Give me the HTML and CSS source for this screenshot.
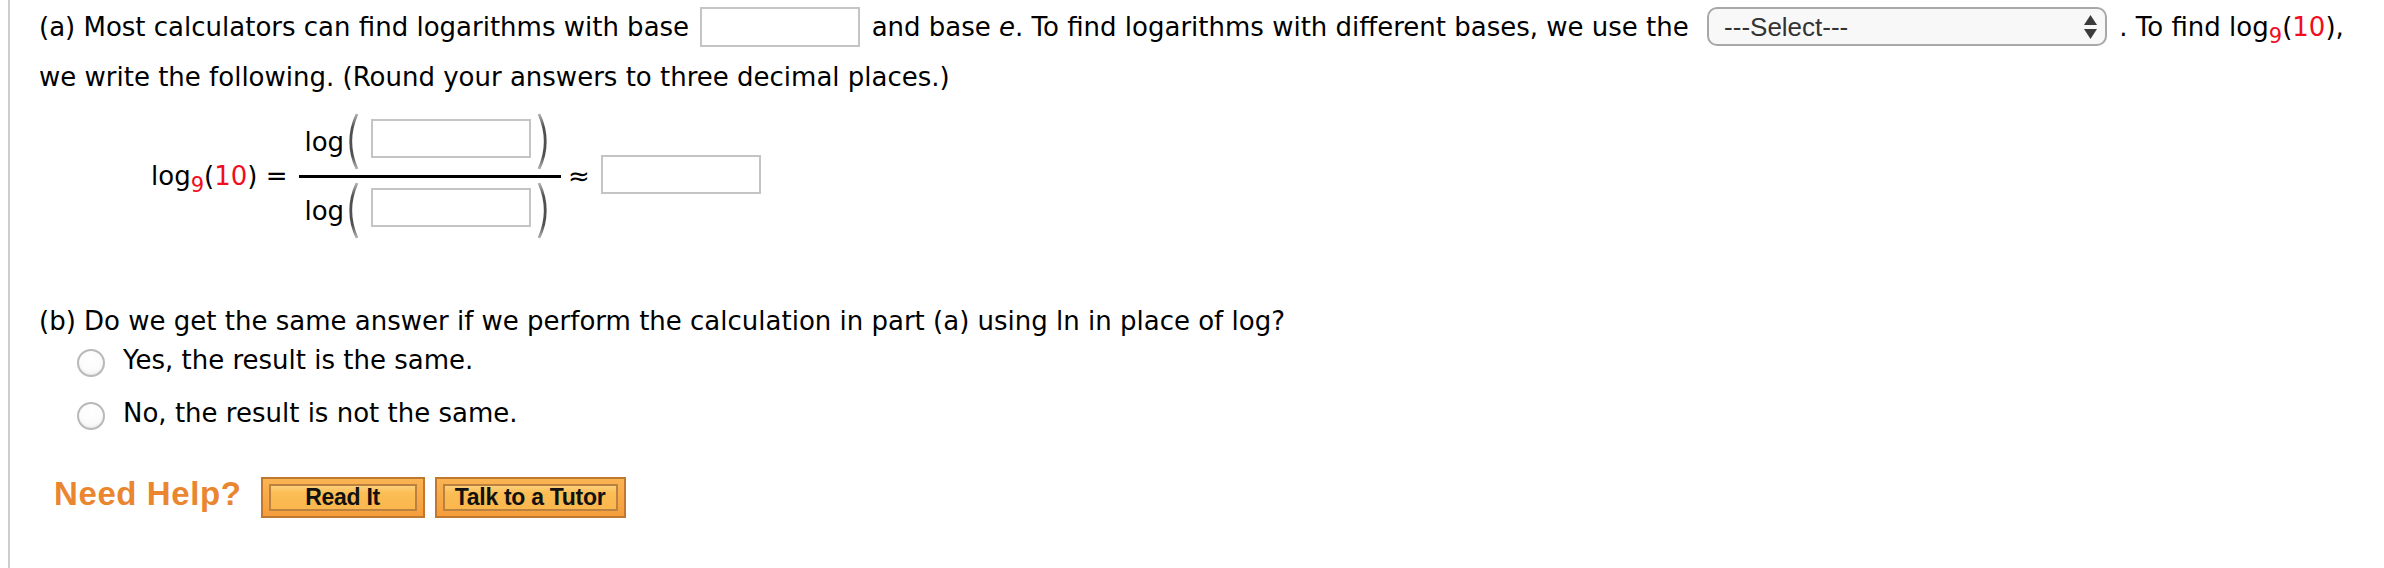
FILE: index.html
```html
<!DOCTYPE html>
<html lang="en">
<head>
<meta charset="utf-8">
<title>Logarithms with different bases</title>
<link rel="stylesheet" href="styles.css">
</head>
<body>
<div class="page">
  <p class="qa">
    <span class="line">(a) Most calculators can find logarithms with base <input class="box box-base" type="text"> and base <i>e</i>. To find logarithms with different bases, we use the <span class="select"><span class="select-label">---Select---</span><svg class="select-arrows" width="13" height="24" viewBox="0 0 13 24"><polygon points="6.5,0 13,10 0,10" fill="#3c3c3c"/><polygon points="0,14 13,14 6.5,24" fill="#3c3c3c"/></svg></span> . To find log<sub class="sub red">9</sub>(<span class="red">10</span>),</span>
    <span class="line">we write the following. (Round your answers to three decimal places.)</span>
  </p>

  <div class="eq">
    <span class="lhs">log<sub class="sub red">9</sub>(<span class="red">10</span>) =</span>
    <span class="frac">
      <span class="frac-part">
        <span class="fn">log</span>
        <svg class="paren" width="15" height="57" viewBox="0 0 15 57"><defs><linearGradient id="pg" x1="0" y1="0" x2="0" y2="57" gradientUnits="userSpaceOnUse"><stop offset="0" stop-color="#bbb"/><stop offset="0.25" stop-color="#505050"/><stop offset="0.75" stop-color="#505050"/><stop offset="1" stop-color="#bbb"/></linearGradient></defs><path d="M13 1 Q0.5 28.5 13 56" fill="none" stroke="url(#pg)" stroke-width="2.8"/></svg>
        <input class="box box-frac" type="text">
        <svg class="paren" width="15" height="57" viewBox="0 0 15 57"><path d="M2 1 Q14.5 28.5 2 56" fill="none" stroke="url(#pg)" stroke-width="2.8"/></svg>
      </span>
      <span class="frac-bar"></span>
      <span class="frac-part">
        <span class="fn">log</span>
        <svg class="paren" width="15" height="57" viewBox="0 0 15 57"><path d="M13 1 Q0.5 28.5 13 56" fill="none" stroke="url(#pg)" stroke-width="2.8"/></svg>
        <input class="box box-frac" type="text">
        <svg class="paren" width="15" height="57" viewBox="0 0 15 57"><path d="M2 1 Q14.5 28.5 2 56" fill="none" stroke="url(#pg)" stroke-width="2.8"/></svg>
      </span>
    </span>
    <span class="approx">≈</span>
    <input class="box box-result" type="text">
  </div>

  <p class="qb">(b) Do we get the same answer if we perform the calculation in part (a) using ln in place of log?</p>
  <label class="opt"><input class="radio" type="radio" name="same"><span>Yes, the result is the same.</span></label>
  <label class="opt opt-second"><input class="radio" type="radio" name="same"><span>No, the result is not the same.</span></label>

  <div class="help">
    <span class="help-title">Need Help?</span>
    <button class="btn btn-read" type="button"><span class="btn-inner">Read It</span></button>
    <button class="btn btn-tutor" type="button"><span class="btn-inner">Talk to a Tutor</span></button>
  </div>
</div>
</body>
</html>
```

FILE: styles.css
```css
html, body {
  margin: 0;
  padding: 0;
  background: #fff;
}

body {
  font-family: "DejaVu Sans", Verdana, sans-serif;
  font-size: 26px;
  color: #000;
}

.page {
  margin-left: 8px;
  border-left: 2px solid #cdcdcd;
  padding-left: 29px;
  min-height: 568px;
  box-sizing: border-box;
}

.qa {
  margin: 0;
  padding-top: 2px;
  line-height: 50px;
}

.line {
  display: block;
  white-space: nowrap;
}

.red {
  color: #f20d1e;
}

.sub {
  font-size: 21px;
  line-height: 0;
  vertical-align: -7px;
}

.box {
  box-sizing: border-box;
  border: 2px solid #c4c4c4;
  background: #fff;
  padding: 0;
  margin: 0;
  font: inherit;
}

.box-base {
  width: 160px;
  height: 40px;
  vertical-align: middle;
  margin: 0 3px 4px 3px;
}

.select {
  display: inline-flex;
  align-items: center;
  justify-content: space-between;
  box-sizing: border-box;
  width: 400px;
  height: 39px;
  vertical-align: middle;
  margin: 0 4px 4px 10px;
  padding: 0 8px 0 15px;
  border: 2px solid #a8a8a8;
  border-radius: 10px;
  background: #f8f8f8;
  font-family: "Liberation Sans", Arial, sans-serif;
  font-size: 26px;
  line-height: 1;
  color: #333;
}

.select-label {
  display: block;
}

.select-arrows {
  display: block;
}

/* equation */
.eq {
  display: flex;
  align-items: center;
  margin: 11px 0 0 112px;
}

.lhs {
  line-height: 30px;
  white-space: nowrap;
}

.frac {
  display: flex;
  flex-direction: column;
  margin-left: 12px;
}

.frac-part {
  display: flex;
  align-items: center;
  height: 57px;
  padding: 0 9px 0 5px;
}

.fn {
  line-height: 30px;
}

.paren {
  display: block;
  flex: none;
}

.box-frac {
  width: 160px;
  height: 39px;
  margin: 0 6px 6px 12px;
}

.frac-bar {
  display: block;
  height: 3px;
  background: #000;
  margin: 5px 0 4px;
}

.approx {
  margin-left: 7px;
  line-height: 30px;
}

.box-result {
  width: 160px;
  height: 39px;
  margin: 0 0 4px 11px;
}

/* part b */
.qb {
  margin: 63px 0 0;
  line-height: 38px;
  white-space: nowrap;
}

.opt {
  display: flex;
  align-items: center;
  height: 40px;
  margin-left: 38px;
  line-height: 30px;
}

.opt-second {
  margin-top: 13px;
}

.radio {
  -webkit-appearance: none;
  appearance: none;
  box-sizing: border-box;
  width: 28px;
  height: 28px;
  margin: 6px 18px 0 0;
  border-radius: 50%;
  border: 2px solid #b9b9b9;
  background: radial-gradient(circle at 50% 35%, #ffffff 0%, #fbfbfb 55%, #ececec 100%);
  box-shadow: inset 0 -1px 1px rgba(0,0,0,0.06);
  flex: none;
}

/* help */
.help {
  display: flex;
  align-items: center;
  margin: 42px 0 0 15px;
}

.help-title {
  font-family: "Liberation Sans", Arial, sans-serif;
  font-weight: bold;
  font-size: 33px;
  letter-spacing: 0.6px;
  color: #ea8630;
  margin-bottom: 6px;
  margin-right: 19px;
}

.btn {
  box-sizing: border-box;
  height: 41px;
  padding: 5px 6px;
  margin: 0;
  border: 2px solid #c0782f;
  background: linear-gradient(#fbb453, #f69d3c);
  font-family: "Liberation Sans", Arial, sans-serif;
  font-weight: bold;
  font-size: 23px;
  letter-spacing: -0.3px;
  color: #111;
  cursor: pointer;
}

.btn-inner {
  display: flex;
  align-items: center;
  justify-content: center;
  height: 100%;
  box-sizing: border-box;
  border: 2px solid #b98240;
  background: linear-gradient(#fdd07a 0%, #fbbd55 30%, #fab74d 100%);
}

.btn-read {
  width: 164px;
}

.btn-tutor {
  width: 191px;
  margin-left: 10px;
}
```
